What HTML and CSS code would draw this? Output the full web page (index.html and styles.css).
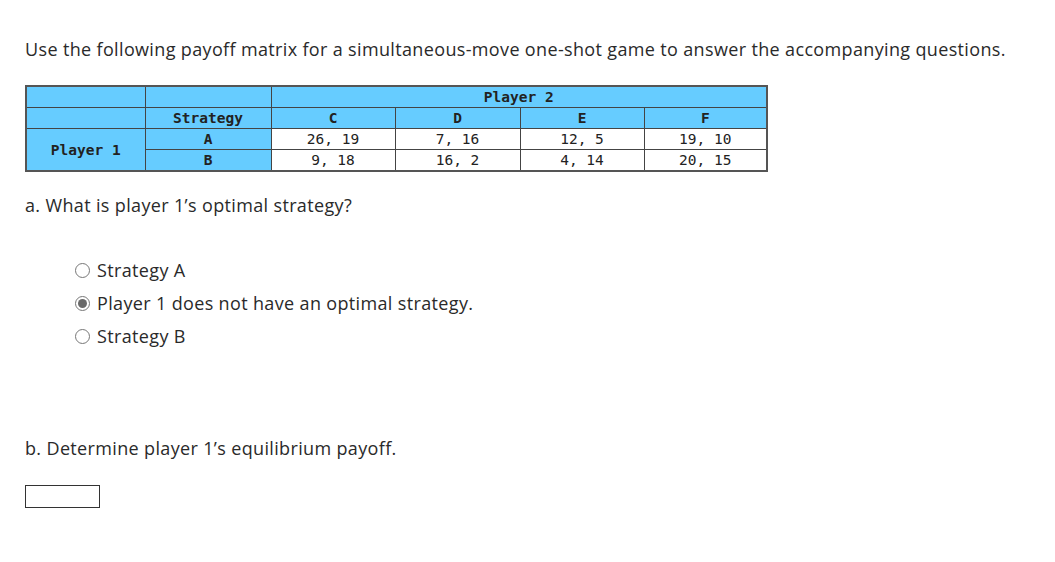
FILE: index.html
```html
<!DOCTYPE html>
<html>
<head>
<meta charset="utf-8">
<link rel="stylesheet" href="styles.css">
</head>
<body>
<div class="page">
  <p class="intro">Use the following payoff matrix for a simultaneous-move one-shot game to answer the accompanying questions.</p>
  <table class="matrix">
    <colgroup>
      <col class="c1"><col class="c2"><col class="c3"><col class="c4"><col class="c5"><col class="c6">
    </colgroup>
    <tr class="hd">
      <td></td><td></td><td colspan="4" class="b">Player 2</td>
    </tr>
    <tr class="hd">
      <td></td><td class="b">Strategy</td><td class="b">C</td><td class="b">D</td><td class="b">E</td><td class="b">F</td>
    </tr>
    <tr>
      <td rowspan="2" class="hdc b">Player 1</td><td class="hdc b">A</td><td>26, 19</td><td>7, 16</td><td>12, 5</td><td>19, 10</td>
    </tr>
    <tr>
      <td class="hdc b">B</td><td>9, 18</td><td>16, 2</td><td>4, 14</td><td>20, 15</td>
    </tr>
  </table>
  <p class="q qa">a. What is player 1’s optimal strategy?</p>
  <ul class="options">
    <li><span class="radio"></span>Strategy A</li>
    <li><span class="radio on"></span>Player 1 does not have an optimal strategy.</li>
    <li><span class="radio"></span>Strategy B</li>
  </ul>
  <p class="q qb">b. Determine player 1’s equilibrium payoff.</p>
  <div class="answer"></div>
</div>
</body>
</html>
```
FILE: styles.css
```css
html, body {
  margin: 0;
  padding: 0;
  background: #fff;
}
.page {
  padding: 36px 0 0 25px;
  font-family: "Open Sans", "Liberation Sans", sans-serif;
  color: #2a2a2a;
}
.intro {
  margin: 0;
  font-size: 18px;
  letter-spacing: 0.35px;
  line-height: 26px;
}
.matrix {
  margin-top: 23px;
  border-collapse: collapse;
  border: 2px solid #555;
  font-family: "DejaVu Sans Mono", monospace;
  font-size: 14.5px;
  color: #222;
}
.matrix col.c1 { width: 119px; }
.matrix col.c2 { width: 126px; }
.matrix col.c3 { width: 124px; }
.matrix col.c4 { width: 125px; }
.matrix col.c5 { width: 124px; }
.matrix col.c6 { width: 123px; }
.matrix td {
  border: 1px solid #444;
  height: 20px;
  padding: 0;
  text-align: center;
  line-height: 20px;
  background: #fff;
}
.matrix tr.hd td,
.matrix td.hdc {
  background: #66ccff;
}
.matrix .b { font-weight: bold; }
.q {
  margin: 0;
  font-size: 18px;
  letter-spacing: 0.35px;
  line-height: 26px;
}
.qa { margin-top: 20px; }
.options {
  list-style: none;
  margin: 36px 0 0 50px;
  padding: 0;
}
.options li {
  display: flex;
  align-items: center;
  font-size: 18px;
  letter-spacing: 0.35px;
  line-height: 33px;
  height: 33px;
}
.radio {
  width: 15px;
  height: 15px;
  border: 1px solid #777;
  border-radius: 50%;
  box-sizing: border-box;
  margin-right: 7px;
  flex: none;
  position: relative;
}
.radio.on::after {
  content: "";
  position: absolute;
  left: 2px;
  top: 2px;
  width: 9px;
  height: 9px;
  border-radius: 50%;
  background: #6a6a6a;
}
.qb { margin-top: 82px; }
.answer {
  margin-top: 24px;
  width: 75px;
  height: 23px;
  border: 1px solid #333;
  box-sizing: border-box;
}
```
